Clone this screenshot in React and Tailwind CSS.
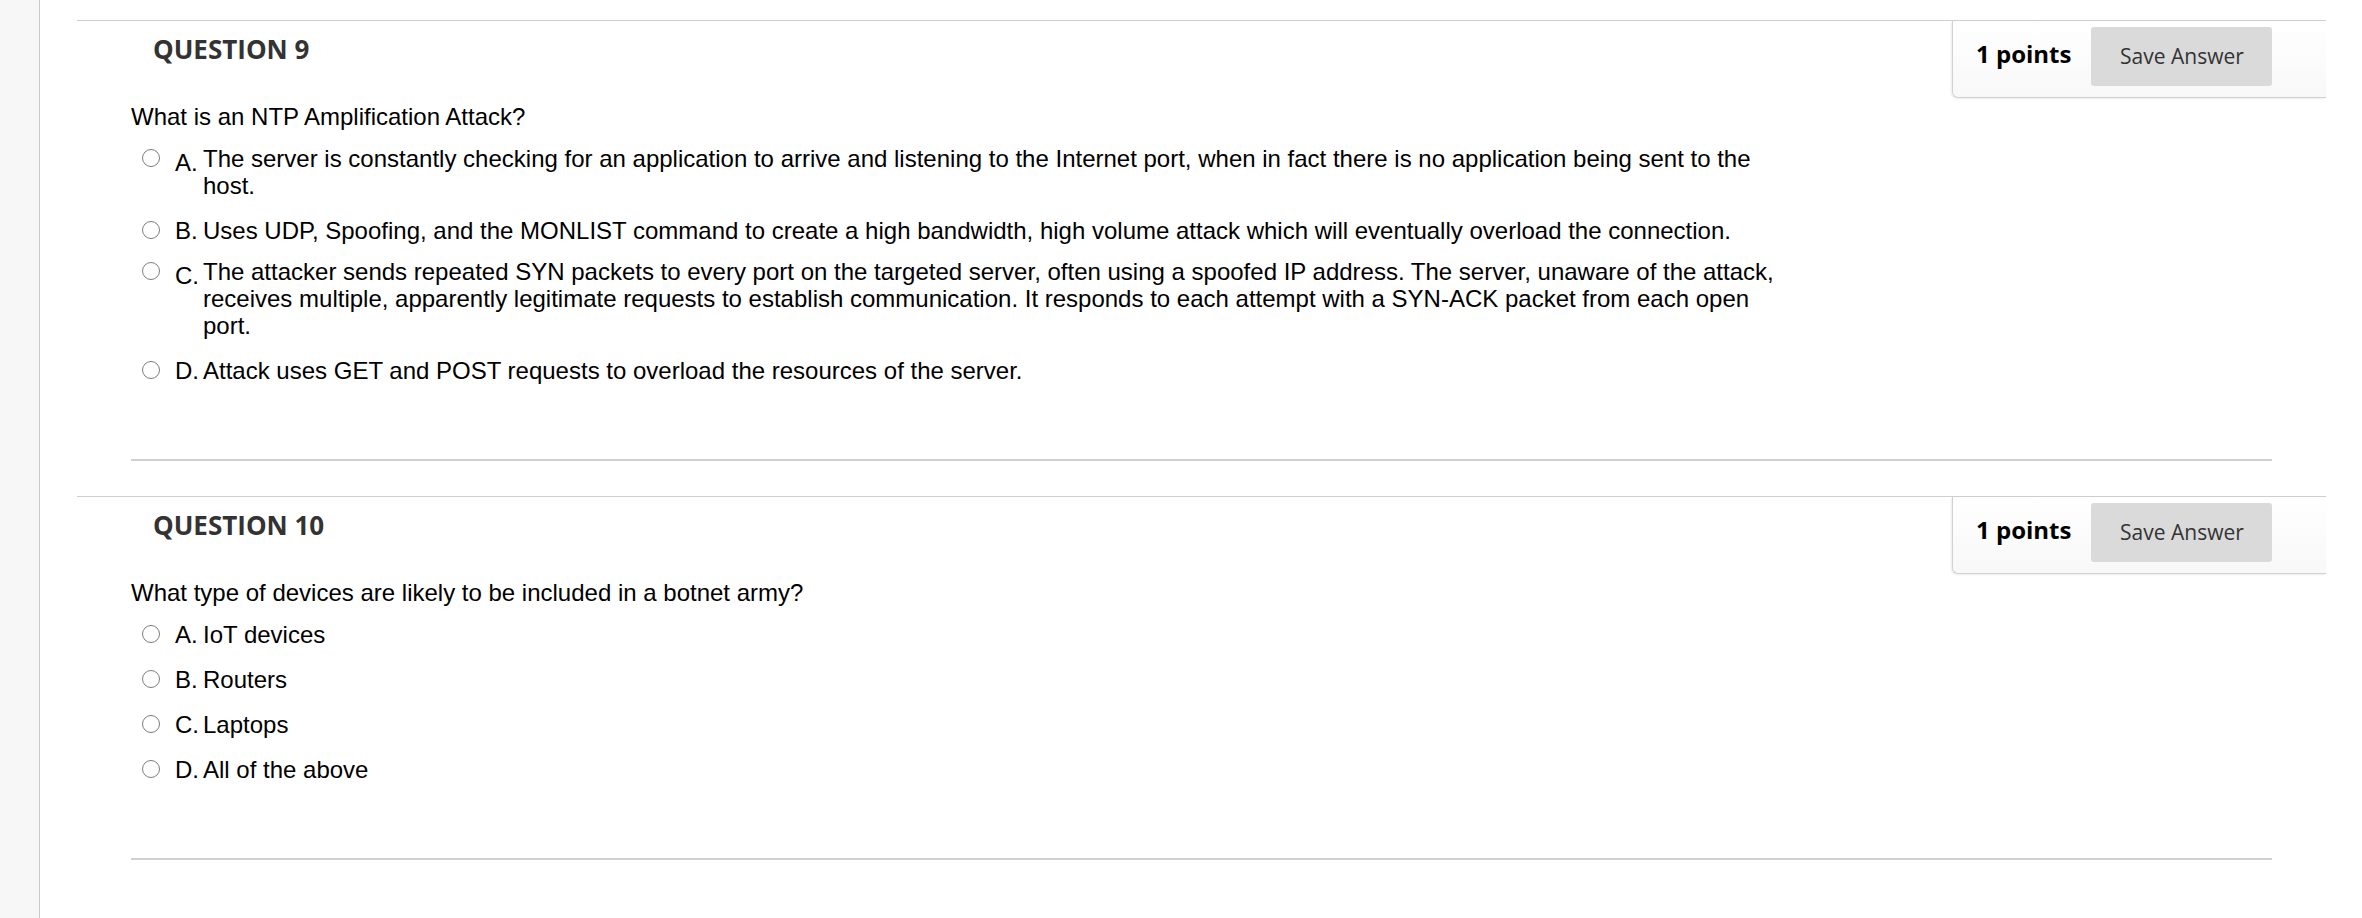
import React from "react";

const questions = [
  {
    num: 9,
    text: "What is an NTP Amplification Attack?",
    options: [
      { label: "A.", text: "The server is constantly checking for an application to arrive and listening to the Internet port, when in fact there is no application being sent to the host.", drop: true },
      { label: "B.", text: "Uses UDP, Spoofing, and the MONLIST command to create a high bandwidth, high volume attack which will eventually overload the connection." },
      { label: "C.", text: "The attacker sends repeated SYN packets to every port on the targeted server, often using a spoofed IP address. The server, unaware of the attack, receives multiple, apparently legitimate requests to establish communication. It responds to each attempt with a SYN-ACK packet from each open port.", drop: true, tight: true },
      { label: "D.", text: "Attack uses GET and POST requests to overload the resources of the server." },
    ],
  },
  {
    num: 10,
    text: "What type of devices are likely to be included in a botnet army?",
    options: [
      { label: "A.", text: "IoT devices" },
      { label: "B.", text: "Routers" },
      { label: "C.", text: "Laptops" },
      { label: "D.", text: "All of the above" },
    ],
  },
];

// one answer row: radio, letter, text column
function Option({ label, text, drop, tight }) {
  return (
    <div className={`flex items-start ml-[11px] ${tight ? "-mt-[4px]" : ""}`}>
      <span className="mt-[4px] w-[18px] h-[18px] shrink-0 rounded-full border-[1.5px] border-[#7d7d7d] bg-white" />
      <span className={`ml-[15px] w-[28px] shrink-0 ${drop ? "pt-[4px]" : ""}`}>{label}</span>
      <span className="w-[1588px]">{text}</span>
    </div>
  );
}

function Question({ q }) {
  return (
    <section className="border-t border-[#cfcfcf]">
      {/* header: title on the left, points + save on the right */}
      <div className="flex justify-between items-start">
        <h2 className="ml-[76px] mt-[10px] text-[26px] leading-[36px] font-bold text-[#333] font-['Open_Sans',sans-serif]">
          QUESTION {q.num}
        </h2>
        <div className="w-[374px] h-[77px] flex items-start pt-[6px] pl-[23px] border-l border-b border-[#d2d2d2] rounded-bl-[6px] bg-gradient-to-b from-white to-[#f8f8f8] shadow-[-1px_1px_2px_rgba(0,0,0,0.08)] font-['Open_Sans',sans-serif]">
          <span className="h-[59px] pb-[6px] flex items-center text-[24px] font-bold text-black">1 points</span>
          <button className="ml-[20px] w-[181px] h-[59px] rounded-[3px] bg-[#dadada] text-[21px] text-[#333]">
            Save Answer
          </button>
        </div>
      </div>

      <div className="mx-[54px] text-[24px] leading-[27px] text-black font-['Liberation_Sans',Arial,sans-serif]">
        <p className="mt-[5px]">{q.text}</p>
        <div className="mt-[15px] flex flex-col gap-[18px]">
          {q.options.map((o) => (
            <Option key={o.label} {...o} />
          ))}
        </div>
        <div className="mt-[75px] h-[2px] bg-[#d0d0d0]" />
      </div>
    </section>
  );
}

export default function App() {
  return (
    <div className="min-h-screen flex bg-white">
      <div className="w-[40px] shrink-0 bg-[#f7f7f7] border-r border-[#c9c9c9]" />
      <div className="flex-1 pl-[37px] pr-[36px] pt-[20px] flex flex-col gap-[35px]">
        {questions.map((q) => (
          <Question key={q.num} q={q} />
        ))}
      </div>
    </div>
  );
}
